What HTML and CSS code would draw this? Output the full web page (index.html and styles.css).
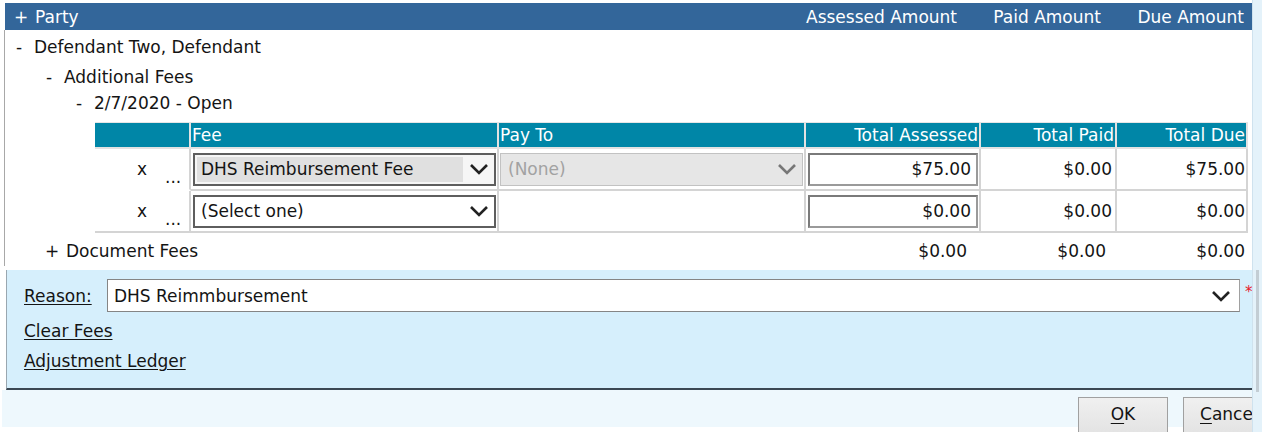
FILE: index.html
```html
<!DOCTYPE html>
<html>
<head>
<meta charset="utf-8">
<link rel="stylesheet" href="styles.css">
</head>
<body>
<div class="screen">
  <div class="main">
    <div class="topbar">
      <div class="tb-party"><span class="tog plus">+</span>Party</div>
      <div class="tb-col tb-assessed">Assessed Amount</div>
      <div class="tb-col tb-paid">Paid Amount</div>
      <div class="tb-col tb-due">Due Amount</div>
    </div>
    <div class="tree">
      <div class="trow lvl1"><span class="tog">-</span>Defendant Two, Defendant</div>
      <div class="trow lvl2"><span class="tog">-</span>Additional Fees</div>
      <div class="trow lvl3 short"><span class="tog">-</span>2/7/2020 - Open</div>
      <table class="fees">
        <colgroup>
          <col class="w0">
          <col class="w1">
          <col class="w2">
          <col class="w3">
          <col class="w4">
          <col class="w5">
        </colgroup>
        <thead>
          <tr>
            <th></th>
            <th>Fee</th>
            <th>Pay To</th>
            <th class="num">Total Assessed</th>
            <th class="num">Total Paid</th>
            <th class="num last">Total Due</th>
          </tr>
        </thead>
        <tbody>
          <tr class="first">
            <td class="act"><span class="x">x</span><span class="dots">...</span></td>
            <td>
              <div class="sel sel-fee"><span class="sel-text">DHS Reimbursement Fee</span><span class="sel-arrow"><svg width="20" height="12" viewBox="0 0 20 12"><polyline points="2,2 10,10 18,2" fill="none" stroke="#222" stroke-width="2.6"/></svg></span></div>
            </td>
            <td>
              <div class="sel sel-dis"><span class="sel-text">(None)</span><span class="sel-arrow"><svg width="20" height="12" viewBox="0 0 20 12"><polyline points="2,2 10,10 18,2" fill="none" stroke="#777" stroke-width="2.6"/></svg></span></div>
            </td>
            <td><div class="amt-input">$75.00</div></td>
            <td class="num">$0.00</td>
            <td class="num last">$75.00</td>
          </tr>
          <tr>
            <td class="act"><span class="x">x</span><span class="dots">...</span></td>
            <td>
              <div class="sel sel-plain"><span class="sel-text">(Select one)</span><span class="sel-arrow"><svg width="20" height="12" viewBox="0 0 20 12"><polyline points="2,2 10,10 18,2" fill="none" stroke="#222" stroke-width="2.6"/></svg></span></div>
            </td>
            <td></td>
            <td><div class="amt-input">$0.00</div></td>
            <td class="num">$0.00</td>
            <td class="num last">$0.00</td>
          </tr>
        </tbody>
      </table>
      <div class="docrow">
        <div class="doc-label"><span class="tog plus">+</span>Document Fees</div>
        <div class="doc-amt d1">$0.00</div>
        <div class="doc-amt d2">$0.00</div>
        <div class="doc-amt d3">$0.00</div>
      </div>
    </div>
    <div class="panel">
      <div class="reason-row">
        <span class="link reason-label">Reason:</span>
        <div class="reason-sel"><span class="sel-text">DHS Reimmbursement</span><span class="sel-arrow"><svg width="20" height="12" viewBox="0 0 20 12"><polyline points="2,2 10,10 18,2" fill="none" stroke="#222" stroke-width="2.6"/></svg></span></div>
        <span class="req">*</span>
      </div>
      <div class="prow"><span class="link">Clear Fees</span></div>
      <div class="prow"><span class="link">Adjustment Ledger</span></div>
    </div>
    <div class="footer">
      <div class="btn btn-ok"><span class="u">O</span>K</div>
      <div class="btn btn-cancel"><span class="u">C</span>ance</div>
    </div>
  </div>
  <div class="scroll"><div class="thumb"></div></div>
</div>
</body>
</html>
```

FILE: styles.css
```css
html, body {
  margin: 0;
  padding: 0;
  background: #ffffff;
}

.screen {
  width: 1262px;
  height: 432px;
  display: flex;
  overflow: hidden;
  font-family: "DejaVu Sans", Verdana, sans-serif;
  font-size: 17px;
  color: #141414;
}

.main {
  width: 1252px;
  flex: none;
  padding-top: 3px;
  overflow: hidden;
}

.scroll {
  width: 10px;
  flex: none;
  background: #e4f2fa;
  border-left: 1px solid #cfe2ee;
  box-sizing: border-box;
  padding-top: 270px;
  display: flex;
  justify-content: center;
}

.thumb {
  width: 3px;
  height: 122px;
  background: #c3cdd4;
}

/* top header bar */
.topbar {
  margin-left: 5px;
  height: 27px;
  background: #33669a;
  color: #ffffff;
  display: flex;
  align-items: center;
  padding-right: 8px;
}

.tb-party {
  flex: 1;
  padding-left: 9px;
}

.tb-col {
  text-align: right;
  white-space: nowrap;
}

.tb-assessed { width: 170px; }
.tb-paid { width: 144px; }
.tb-due { width: 143px; }

.tog {
  display: inline-block;
  width: 18px;
}

.tog.plus {
  width: 21px;
}

/* tree */
.tree {
  margin-left: 4px;
  border-left: 1px solid #a8a8a8;
  padding-top: 2px;
  height: 236px;
  box-sizing: border-box;
}

.trow {
  height: 30px;
  display: flex;
  align-items: center;
  white-space: nowrap;
}

.trow.short {
  height: 22px;
}

.lvl1 { padding-left: 11px; }
.lvl2 { padding-left: 41px; }
.lvl3 { padding-left: 71px; }

/* fee table */
.fees {
  margin-top: 8px;
  margin-left: 90px;
  border-collapse: separate;
  border-spacing: 0;
  table-layout: fixed;
  width: 1153px;
}

.w0 { width: 96px; }
.w1 { width: 308px; }
.w2 { width: 307px; }
.w3 { width: 175px; }
.w4 { width: 136px; }
.w5 { width: 131px; }

.fees th {
  background: #0086a7;
  color: #ffffff;
  font-weight: normal;
  height: 24px;
  padding: 0 1px;
  text-align: left;
  border-right: 2px solid #e2e2e2;
  border-bottom: 2px solid #e2e2e2;
  border-top: 1px solid #e6e6e6;
  white-space: nowrap;
  overflow: hidden;
  line-height: 24px;
}

.fees th.num {
  text-align: right;
}

.fees td {
  height: 40px;
  padding: 0;
  border-right: 2px solid #d4d4d4;
  border-bottom: 2px solid #d4d4d4;
  vertical-align: middle;
  white-space: nowrap;
}

.fees td.num {
  text-align: right;
  padding-right: 3px;
}

.fees td.last, .fees th.last {
  padding-right: 1px;
}

.fees tr.first td.act {
  border-bottom-color: #ffffff;
}

.act {
  position: relative;
}

.act .x {
  position: absolute;
  left: 42px;
  top: 10px;
}

.act .dots {
  position: absolute;
  left: 70px;
  top: 18px;
}

.sel {
  margin: 0 1px 0 2px;
  height: 33px;
  box-sizing: border-box;
  display: flex;
  align-items: center;
  justify-content: space-between;
}

.sel-fee {
  border: 2px solid #5e5e5e;
  background: #f6f6f6;
}

.sel-fee .sel-text {
  background: #e0e0e0;
  align-self: stretch;
  display: flex;
  align-items: center;
  flex: 1;
  margin: 2px;
  padding-left: 4px;
}

.sel-plain {
  border: 2px solid #5e5e5e;
  background: #ffffff;
}

.sel-plain .sel-text {
  padding-left: 6px;
}

.sel-dis {
  border: 1px solid #c2c2c2;
  background: #e6e6e6;
  color: #a2a2a2;
  margin-left: 1px;
}

.sel-dis .sel-text {
  padding-left: 7px;
}

.sel-arrow {
  display: flex;
  align-items: center;
  padding: 0 5px 0 4px;
}

.amt-input {
  margin: 0 1px 0 2px;
  height: 33px;
  box-sizing: border-box;
  border: 2px solid #7a7a7a;
  border-right-color: #9a9a9a;
  border-bottom-color: #9a9a9a;
  background: #ffffff;
  display: flex;
  align-items: center;
  justify-content: flex-end;
  padding-right: 5px;
}

/* document fees row */
.docrow {
  height: 36px;
  display: flex;
  align-items: center;
  white-space: nowrap;
}

.doc-label {
  box-sizing: border-box;
  padding-left: 40px;
  width: 840px;
}

.doc-amt {
  text-align: right;
}

.d1 { width: 122px; }
.d2 { width: 139px; }
.d3 { width: 139px; }

/* panel */
.panel {
  margin-top: 4px;
  margin-left: 6px;
  background: #d6effc;
  border-left: 1px solid #9aa7b0;
  border-bottom: 2px solid #3b4853;
  height: 118px;
  box-sizing: content-box;
}

.reason-row {
  display: flex;
  align-items: center;
  padding-left: 17px;
  padding-top: 9px;
  margin-bottom: 4px;
}

.link {
  text-decoration: underline;
  text-underline-offset: 2px;
}

.reason-label {
  width: 83px;
  flex: none;
}

.reason-sel {
  width: 1133px;
  height: 33px;
  box-sizing: border-box;
  border: 1px solid #858585;
  border-right-color: #a0a0a0;
  background: #ffffff;
  display: flex;
  align-items: center;
  justify-content: space-between;
  padding-left: 6px;
  flex: none;
}

.reason-sel .sel-arrow {
  padding-right: 8px;
}

.req {
  color: #e8202a;
  margin-left: 5px;
  font-size: 15px;
  align-self: flex-start;
  margin-top: 4px;
}

.prow {
  height: 30px;
  display: flex;
  align-items: center;
  padding-left: 17px;
}

/* footer */
.footer {
  margin-left: 2px;
  height: 37px;
  background: #eef8fd;
  display: flex;
  justify-content: flex-end;
  padding-top: 7px;
  box-sizing: border-box;
  gap: 15px;
  margin-right: -21px;
}

.btn {
  height: 40px;
  box-sizing: border-box;
  border: 1px solid #a0a0a0;
  background: linear-gradient(#f0f0f0, #e2e2e2);
  display: flex;
  justify-content: center;
  padding-top: 6px;
  flex: none;
}

.btn-ok { width: 90px; }
.btn-cancel {
  width: 90px;
  justify-content: flex-start;
  padding-left: 16px;
}

.u {
  text-decoration: underline;
  text-underline-offset: 3px;
}
```
